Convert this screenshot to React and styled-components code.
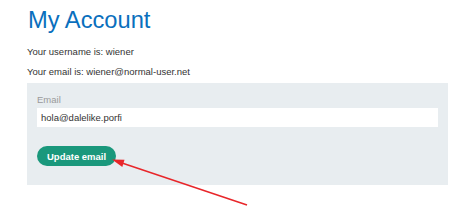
import React from "react";
import styled, { createGlobalStyle } from "styled-components";

const GlobalStyle = createGlobalStyle`
  body {
    margin: 0;
    background: #ffffff;
    font-family: "Liberation Sans", Arial, sans-serif;
  }
`;

const Page = styled.div`
  position: relative;
  width: 474px;
  height: 215px;
  padding: 0 26px 0 27px;
  box-sizing: border-box;
  overflow: hidden;
`;

const Title = styled.h1`
  margin: 6px 0 8px 1px;
  font-size: 23.7px;
  line-height: 28.4px;
  font-weight: 400;
  color: #0a6fbd;
`;

const Info = styled.p`
  margin: 0;
  font-size: 9.5px;
  line-height: 19.5px;
  color: #333333;
`;

const Panel = styled.form`
  margin-top: 2px;
  padding: 10px 10px 19px;
  background-color: #e8edf0;
  display: flex;
  flex-direction: column;
  align-items: flex-start;
`;

const Label = styled.label`
  font-size: 9.5px;
  line-height: 13px;
  color: #9a9a9a;
  margin-bottom: 2px;
`;

const Input = styled.input`
  width: 100%;
  height: 19px;
  box-sizing: border-box;
  border: none;
  outline: none;
  background: #ffffff;
  padding: 0 4px;
  font-family: "Liberation Sans", Arial, sans-serif;
  font-size: 9.5px;
  color: #333333;
`;

const Button = styled.button`
  margin-top: 19px;
  height: 20px;
  padding: 0 10px;
  border: none;
  border-radius: 10px;
  background-color: #1a987c;
  color: #ffffff;
  font-family: "Liberation Sans", Arial, sans-serif;
  font-size: 9.5px;
  font-weight: 700;
`;

const Overlay = styled.svg`
  position: absolute;
  left: 0;
  top: 0;
  pointer-events: none;
`;

const App = () => {
  return (
    <>
      <GlobalStyle />
      <Page>
        <Title>My Account</Title>
        <Info>Your username is: wiener</Info>
        <Info>Your email is: wiener@normal-user.net</Info>
        <Panel onSubmit={(e) => e.preventDefault()}>
          <Label>Email</Label>
          <Input type="email" defaultValue="hola@dalelike.porfi" />
          <Button>Update email</Button>
        </Panel>
        <Overlay width="474" height="215" viewBox="0 0 474 215">
          <line x1="247" y1="205" x2="122" y2="163" stroke="#e8262a" strokeWidth="1.5" />
          <polygon points="112,159.5 124.5,159.8 122.3,167" fill="#e8262a" />
        </Overlay>
      </Page>
    </>
  );
};

export default App;
